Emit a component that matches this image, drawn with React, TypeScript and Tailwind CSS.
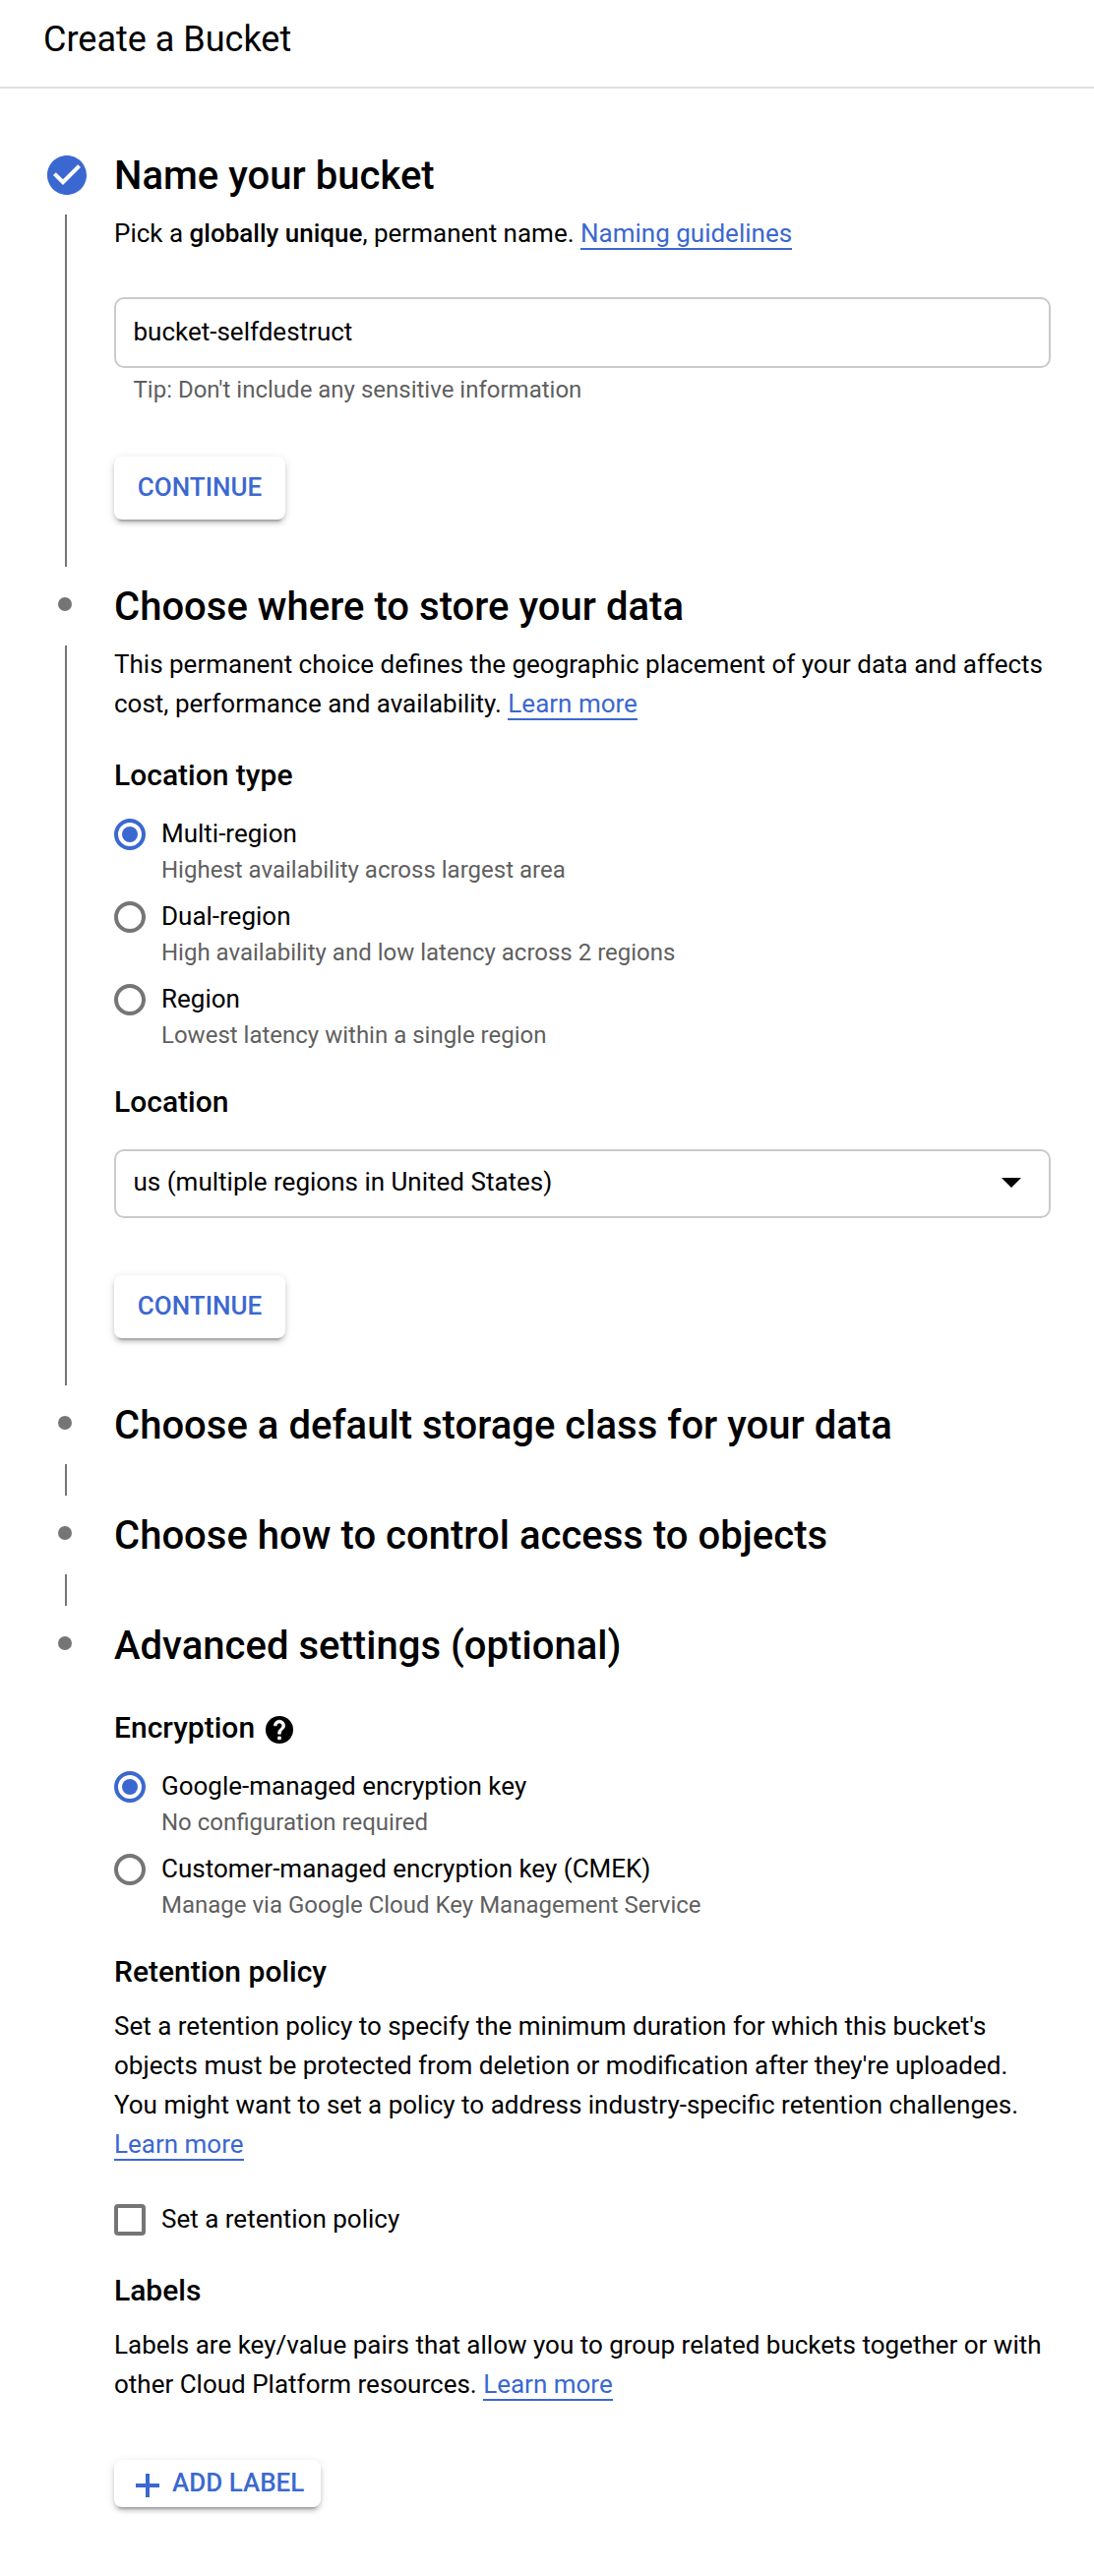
import type { ReactNode } from "react";

function StepLink({ children }: { children: ReactNode }) {
  return (
    <a href="#" className="border-b-2 border-[#3b68d0] text-[#3b68d0]">
      {children}
    </a>
  );
}

function CheckCircle() {
  return (
    <svg viewBox="2 2 20 20" className="mt-5 h-10 w-10 fill-[#3b68d0]" aria-hidden="true">
      <path d="M12 2C6.48 2 2 6.48 2 12s4.48 10 10 10 10-4.48 10-10S17.52 2 12 2zm-2 15l-5-5 1.41-1.41L10 14.17l7.59-7.59L19 8l-9 9z" />
    </svg>
  );
}

function HelpIcon() {
  return (
    <svg viewBox="2 2 20 20" className="mt-1.5 h-7 w-7" aria-hidden="true">
      <circle cx="12" cy="12" r="10" fill="#000" />
      <path
        d="M13 19h-2v-2h2v2zm2.07-7.75l-.9.92C13.45 12.9 13 13.5 13 15h-2v-.5c0-1.1.45-2.1 1.17-2.83l1.24-1.26c.37-.36.59-.86.59-1.41 0-1.1-.9-2-2-2s-2 .9-2 2H8c0-2.21 1.79-4 4-4s4 1.79 4 4c0 .88-.36 1.68-.93 2.25z"
        fill="#fff"
        stroke="#fff"
        strokeWidth="0.5"
      />
    </svg>
  );
}

function Step({
  title,
  done = false,
  last = false,
  children,
}: {
  title: string;
  done?: boolean;
  last?: boolean;
  children?: ReactNode;
}) {
  return (
    <section className="flex min-h-28">
      <div className="flex w-10 shrink-0 flex-col">
        <div className="flex h-20 shrink-0">
          {done ? <CheckCircle /> : <span className="mt-[31px] ml-[11px] h-3.5 w-3.5 rounded-full bg-[#757575]" />}
        </div>
        {!last && <div className="ml-[18px] w-0.5 grow bg-[#757575]" />}
      </div>
      <div className="ml-7 w-[952px]">
        <h2 className="mt-[17px] text-[40px] leading-[47px] font-medium tracking-[0.025px]">{title}</h2>
        {children}
      </div>
    </section>
  );
}

function RadioRow({ label, hint, checked = false }: { label: string; hint: string; checked?: boolean }) {
  return (
    <div className="flex h-[70px] gap-4">
      {checked ? (
        <span className="flex h-8 w-8 items-center justify-center rounded-full border-4 border-[#3b68d0]">
          <span className="h-4 w-4 rounded-full bg-[#3b68d0]" />
        </span>
      ) : (
        <span className="h-8 w-8 rounded-full border-4 border-[#757575]" />
      )}
      <div>
        <div className="-mt-px leading-8">{label}</div>
        <div className="mt-[3px] text-2xl leading-9 text-[#5f5f5f]">{hint}</div>
      </div>
    </div>
  );
}

function ContinueButton() {
  return (
    <button className="flex h-16 w-[174px] items-center justify-center rounded-lg bg-white pb-0.5 font-medium text-[#3b68d0] shadow-[0_6px_2px_-4px_rgba(0,0,0,0.2),0_4px_4px_0_rgba(0,0,0,0.14),0_2px_10px_0_rgba(0,0,0,0.12)]">
      CONTINUE
    </button>
  );
}

export default function App() {
  return (
    <div className="min-h-[2618px] w-[1112px] bg-white font-['Roboto',sans-serif] text-[26px] leading-10 text-black">
      <header className="h-[90px] border-b-2 border-[#e0e0e0] px-11 pt-4">
        <h1 className="text-[36px] leading-[48px]">Create a Bucket</h1>
      </header>

      <main className="pt-12 pl-12">
        <Step title="Name your bucket" done>
          <p className="mt-[15px]">
            Pick a <strong className="font-medium">globally unique</strong>, permanent name.{" "}
            <StepLink>Naming guidelines</StepLink>
          </p>
          <div className="mt-[45px] flex h-[72px] items-center rounded-[10px] border-2 border-[#cacaca] px-[17.5px] pb-0.5">
            bucket-selfdestruct
          </div>
          <p className="mt-1 px-[19.5px] text-2xl leading-9 text-[#5f5f5f]">
            Tip: Don't include any sensitive information
          </p>
          <div className="pt-[50px] pb-12">
            <ContinueButton />
          </div>
        </Step>

        <Step title="Choose where to store your data">
          <p className="mt-[15px]">
            This permanent choice defines the geographic placement of your data and affects
            <br />
            cost, performance and availability. <StepLink>Learn more</StepLink>
          </p>
          <h3 className="mt-[35px] text-[30px] leading-[35px] font-medium">Location type</h3>
          <div className="mt-[27px] flex flex-col gap-3.5">
            <RadioRow label="Multi-region" hint="Highest availability across largest area" checked />
            <RadioRow label="Dual-region" hint="High availability and low latency across 2 regions" />
            <RadioRow label="Region" hint="Lowest latency within a single region" />
          </div>
          <h3 className="mt-8 text-[30px] leading-[35px] font-medium">Location</h3>
          <div className="mt-[31px] flex h-[70px] items-center justify-between rounded-[10px] border-2 border-[#cacaca] pr-7 pl-[17.5px]">
            <span className="pb-1">us (multiple regions in United States)</span>
            <svg viewBox="0 0 20 10" className="-mt-0.5 h-2.5 w-5 fill-black" aria-hidden="true">
              <path d="M0 0h20L10 10z" />
            </svg>
          </div>
          <div className="pt-[58px] pb-12">
            <ContinueButton />
          </div>
        </Step>

        <Step title="Choose a default storage class for your data" />
        <Step title="Choose how to control access to objects" />

        <Step title="Advanced settings (optional)" last>
          <div className="mt-[42px] flex h-[35px] gap-[11px]">
            <h3 className="text-[30px] leading-[35px] font-medium">Encryption</h3>
            <HelpIcon />
          </div>
          <div className="mt-[27px] flex flex-col gap-3.5">
            <RadioRow label="Google-managed encryption key" hint="No configuration required" checked />
            <RadioRow
              label="Customer-managed encryption key (CMEK)"
              hint="Manage via Google Cloud Key Management Service"
            />
          </div>
          <h3 className="mt-8 text-[30px] leading-[35px] font-medium">Retention policy</h3>
          <p className="mt-[18px]">
            Set a retention policy to specify the minimum duration for which this bucket's
            <br />
            objects must be protected from deletion or modification after they're uploaded.
            <br />
            You might want to set a policy to address industry-specific retention challenges.
            <br />
            <StepLink>Learn more</StepLink>
          </p>
          <div className="mt-[41px] flex h-8 gap-4">
            <span className="h-8 w-8 rounded-[4px] border-4 border-[#757575]" />
            <span className="-mt-px leading-8">Set a retention policy</span>
          </div>
          <h3 className="mt-[38px] text-[30px] leading-[35px] font-medium">Labels</h3>
          <p className="mt-[18px]">
            Labels are key/value pairs that allow you to group related buckets together or with
            <br />
            other Cloud Platform resources. <StepLink>Learn more</StepLink>
          </p>
          <button className="mt-[57px] flex h-12 w-[210px] items-center rounded-lg bg-white pl-[22px] font-medium text-[#3b68d0] shadow-[0_6px_2px_-4px_rgba(0,0,0,0.2),0_4px_4px_0_rgba(0,0,0,0.14),0_2px_10px_0_rgba(0,0,0,0.12)]">
            <svg viewBox="0 0 24 24" className="mt-1 h-6 w-6 fill-[#3b68d0]" aria-hidden="true">
              <path d="M10 0h4v10h10v4H14v10h-4V14H0v-4h10z" />
            </svg>
            <span className="ml-[13px] pb-0.5">ADD LABEL</span>
          </button>
        </Step>
      </main>
    </div>
  );
}
